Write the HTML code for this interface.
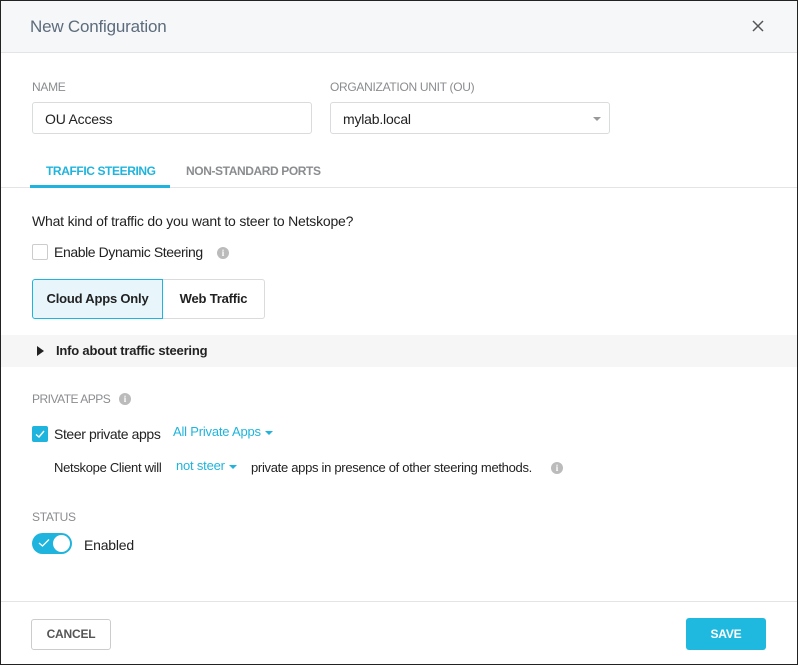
<!DOCTYPE html>
<html><head><meta charset="utf-8"><style>
*{box-sizing:border-box;margin:0;padding:0}
body{width:798px;height:665px;font-family:"Liberation Sans",sans-serif;background:#fff;position:relative;overflow:hidden;color:#222;letter-spacing:-0.2px}
.frame{position:absolute;inset:0;border:1px solid #222}
.hdr{position:absolute;left:1px;top:1px;right:1px;height:52px;background:#f6f7f8;border-bottom:1px solid #e2e4e6}
.abs{position:absolute;white-space:nowrap}
.lbl{font-size:12px;color:#8a8c8f;letter-spacing:-0.3px}
.input{position:absolute;height:32px;border:1px solid #d9dbdd;border-radius:3px;font-size:14px;padding:8px 12px}
.info{display:inline-block;width:12px;height:12px;border-radius:50%;background:#bbb;color:#fff;font-size:9px;font-weight:bold;text-align:center;line-height:12px;font-family:"Liberation Serif",serif;letter-spacing:0}
.blue{color:#1fb4dd}
.tri{display:inline-block;width:0;height:0;border-left:4px solid transparent;border-right:4px solid transparent;border-top:4px solid #1fb4dd;vertical-align:middle;margin-left:4px}
</style></head><body>
<div class="hdr"></div>
<div class="abs" style="left:30px;top:17px;font-size:17px;color:#5d6c7c">New Configuration</div>
<svg class="abs" style="left:752px;top:20px" width="12" height="12"><path d="M1 1L11 11M11 1L1 11" stroke="#555" stroke-width="1.5"/></svg>

<div class="abs lbl" style="left:32px;top:80px">NAME</div>
<div class="abs lbl" style="left:330px;top:80px">ORGANIZATION UNIT (OU)</div>
<div class="input" style="left:32px;top:102px;width:280px">OU Access</div>
<div class="input" style="left:330px;top:102px;width:280px">mylab.local</div>
<div class="abs" style="left:593px;top:117px;border-left:4px solid transparent;border-right:4px solid transparent;border-top:4px solid #999"></div>

<div class="abs" style="left:46px;top:164px;font-size:12px;font-weight:bold;color:#1fb4dd;letter-spacing:-0.4px">TRAFFIC STEERING</div>
<div class="abs" style="left:186px;top:164px;font-size:12px;font-weight:bold;color:#8a8c8f;letter-spacing:-0.4px">NON-STANDARD PORTS</div>
<div class="abs" style="left:1px;right:1px;top:187px;height:1px;background:#e2e4e6"></div>
<div class="abs" style="left:30px;top:185px;width:140px;height:3px;background:#1fb4dd"></div>

<div class="abs" style="left:32px;top:213px;font-size:14px">What kind of traffic do you want to steer to Netskope?</div>
<div class="abs" style="left:32px;top:244px;width:16px;height:16px;border:1px solid #ccc;border-radius:2px"></div>
<div class="abs" style="left:54px;top:244px;font-size:14px;letter-spacing:-0.4px">Enable Dynamic Steering</div>
<span class="abs info" style="left:217px;top:247px">i</span>
<div class="abs" style="left:32px;top:279px;width:131px;height:40px;background:#e8f6fc;border:1px solid #1fb4dd;border-radius:3px 0 0 3px;font-size:13px;font-weight:bold;text-align:center;line-height:38px">Cloud Apps Only</div>
<div class="abs" style="left:163px;top:279px;width:102px;height:40px;border:1px solid #d9dbdd;border-left:none;border-radius:0 3px 3px 0;font-size:13px;font-weight:bold;text-align:center;line-height:38px">Web Traffic</div>

<div class="abs" style="left:1px;right:1px;top:335px;height:32px;background:#f6f6f6"></div>
<div class="abs" style="left:37px;top:346px;border-top:5px solid transparent;border-bottom:5px solid transparent;border-left:7px solid #222"></div>
<div class="abs" style="left:56px;top:343px;font-size:13px;font-weight:bold">Info about traffic steering</div>

<div class="abs lbl" style="left:32px;top:392px;letter-spacing:-0.5px">PRIVATE APPS</div>
<span class="abs info" style="left:119px;top:393px">i</span>
<div class="abs" style="left:32px;top:426px;width:16px;height:16px;background:#1fb4dd;border-radius:2px"><svg width="16" height="16"><path d="M4 8.5L7 11L12 5" stroke="#fff" stroke-width="1.4" fill="none"/></svg></div>
<div class="abs" style="left:54px;top:426px;font-size:14px;letter-spacing:-0.4px">Steer private apps</div>
<div class="abs blue" style="left:173px;top:424px;font-size:13px">All Private Apps<span class="tri"></span></div>
<div class="abs" style="left:54px;top:460px;font-size:13px;letter-spacing:-0.3px">Netskope Client will</div>
<div class="abs blue" style="left:176px;top:458px;font-size:13px">not steer<span class="tri"></span></div>
<div class="abs" style="left:251px;top:460px;font-size:13px;letter-spacing:-0.3px">private apps in presence of other steering methods.</div>
<span class="abs info" style="left:551px;top:462px">i</span>

<div class="abs lbl" style="left:32px;top:510px">STATUS</div>
<div class="abs" style="left:32px;top:533px;width:40px;height:21px;border-radius:11px;background:#1fb4dd"><svg class="abs" style="left:6px;top:5px" width="12" height="10"><path d="M1 5L4.5 8L11 1.5" stroke="#fff" stroke-width="1.3" fill="none"/></svg><div class="abs" style="left:21px;top:2px;width:17px;height:17px;border-radius:50%;background:#fff"></div></div>
<div class="abs" style="left:84px;top:537px;font-size:14px">Enabled</div>

<div class="abs" style="left:1px;right:1px;top:601px;height:1px;background:#e2e4e6"></div>
<div class="abs" style="left:31px;top:619px;width:80px;height:31px;border:1px solid #ccc;border-radius:3px;font-size:12px;font-weight:bold;color:#555;text-align:center;line-height:29px">CANCEL</div>
<div class="abs" style="left:686px;top:618px;width:80px;height:32px;background:#1fb9e0;border-radius:3px;font-size:12px;font-weight:bold;color:#fff;text-align:center;line-height:32px">SAVE</div>
<div class="frame"></div>
</body></html>
